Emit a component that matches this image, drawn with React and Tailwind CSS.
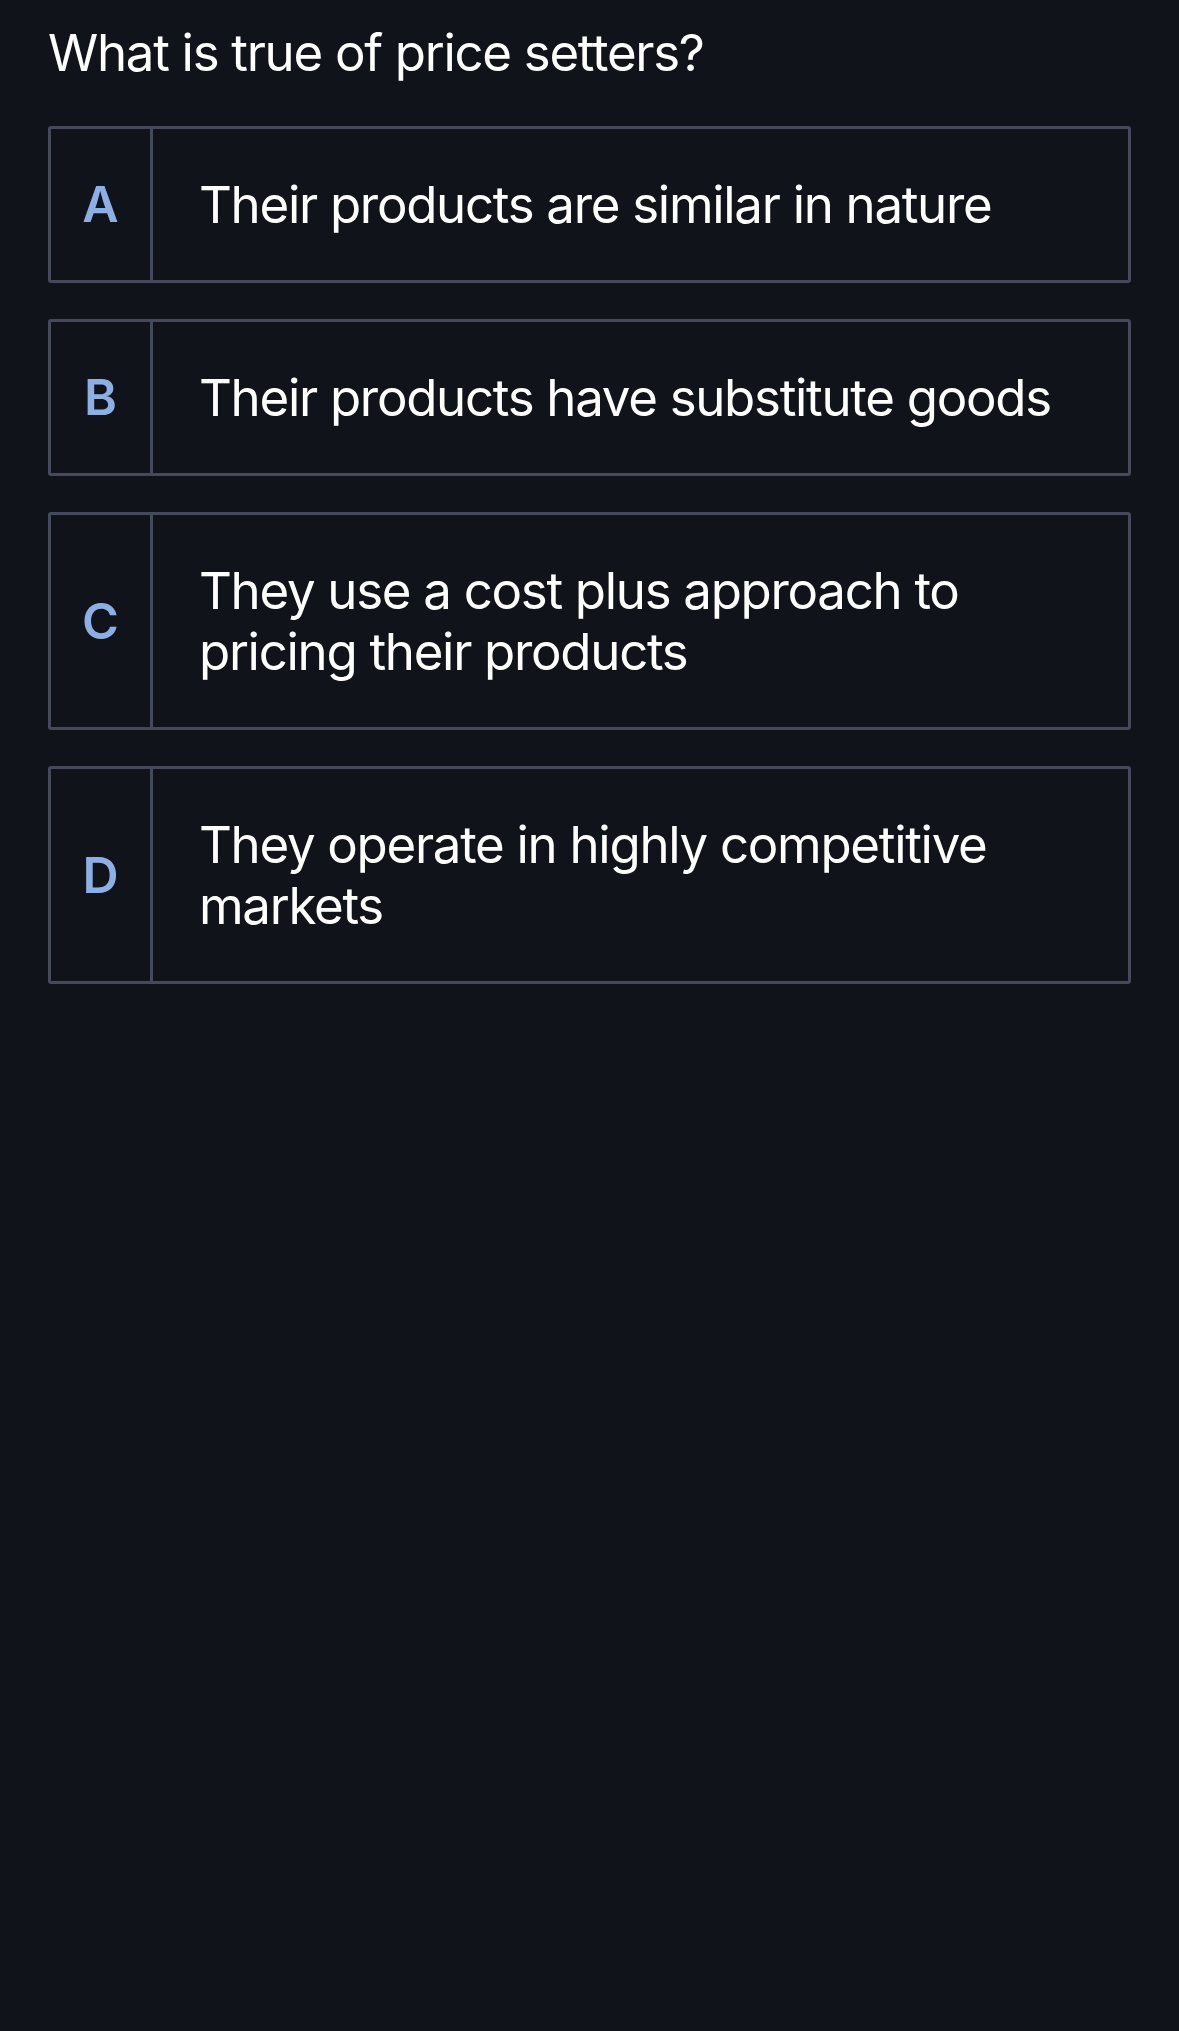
import React from "react";

const options = [
  { letter: "A", text: "Their products are similar in nature" },
  { letter: "B", text: "Their products have substitute goods" },
  { letter: "C", text: "They use a cost plus approach to pricing their products" },
  { letter: "D", text: "They operate in highly competitive markets" },
];

export default function App() {
  return (
    <div
      className="min-h-screen bg-[#11131a] px-[48px] pt-[22px] text-white"
      style={{ fontFamily: "Inter, 'Noto Sans', sans-serif" }}
    >
      <h1 className="text-[51px] font-normal leading-[61px] tracking-[-1.3px] text-white">
        What is true of price setters?
      </h1>
      <div className="mt-[43px] flex flex-col gap-[36px]">
        {options.map((o) => (
          <div
            key={o.letter}
            className="flex rounded-[3px] border-[3px] border-[#444a59]"
          >
            <div className="flex w-[102px] shrink-0 items-center justify-center border-r-[3px] border-[#444a59] text-[50px] font-semibold text-[#8db0e4]">
              {o.letter}
            </div>
            <div className="flex-1 py-[45px] pl-[46px] pr-[46px] text-[51px] leading-[61px] tracking-[-1.3px] text-white">
              {o.text}
            </div>
          </div>
        ))}
      </div>
    </div>
  );
}
